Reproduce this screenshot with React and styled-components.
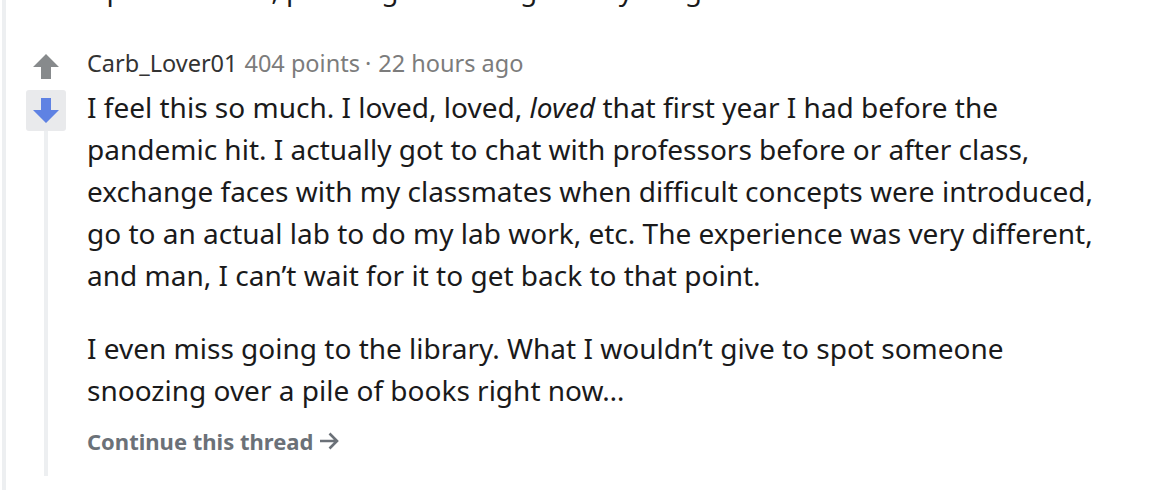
import React from "react";
import styled, { createGlobalStyle } from "styled-components";

const Global = createGlobalStyle`
  html, body { margin: 0; padding: 0; background: #ffffff; }
  body { font-family: "Noto Sans", "Open Sans", sans-serif; }
`;

const Page = styled.div`
  width: 1160px;
  height: 490px;
  overflow: hidden;
  background: #ffffff;
`;

const Thread = styled.div`
  margin-left: 2px;
  border-left: 4px solid #edeff1;
  min-height: 490px;
  box-sizing: border-box;
`;

const ClippedLine = styled.div`
  height: 10px;
  overflow: hidden;
  padding-left: 50px;
`;

const ClippedText = styled.p`
  margin: -32px 0 0 0;
  font-size: 28px;
  line-height: 42px;
  color: #1a1a1b;
  white-space: nowrap;
`;

const Comment = styled.div`
  display: flex;
  padding-top: 38px;
`;

const VoteColumn = styled.div`
  width: 40px;
  margin-left: 20px;
  margin-right: 21px;
  display: flex;
  flex-direction: column;
  align-items: center;
  flex-shrink: 0;
`;

const VoteButton = styled.button`
  width: 40px;
  height: ${(p) => (p.$boxed ? 41 : 36)}px;
  margin-top: ${(p) => (p.$boxed ? 6 : 0)}px;
  border: none;
  border-radius: 3px;
  padding: 0;
  background: ${(p) => (p.$boxed ? "#e9eaec" : "transparent")};
  display: flex;
  align-items: center;
  justify-content: center;
  color: ${(p) => p.$color};
`;

const ThreadLine = styled.div`
  width: 4px;
  flex: 1;
  background: #edeff1;
`;

const Body = styled.div`
  flex: 1;
  padding-bottom: 20px;
`;

const Meta = styled.div`
  display: flex;
  align-items: baseline;
  font-size: 23.5px;
  line-height: 30px;
  color: #7c7c7c;
`;

const MetaItem = styled.span`
  color: ${(p) => (p.$author ? "#333333" : "#7c7c7c")};
  margin-left: ${(p) => p.$gap || 0}px;
`;

const Para = styled.p`
  margin: ${(p) => (p.$first ? "8px" : "31px")} 0 0 0;
  width: 1012px;
  font-size: 28px;
  line-height: 42px;
  color: #1a1a1b;
`;

const ContinueLink = styled.a`
  display: inline-flex;
  align-items: center;
  gap: 4px;
  margin-top: 15px;
  font-size: 22px;
  line-height: 30px;
  font-weight: 700;
  color: #6b7178;
  text-decoration: none;
`;

const Arrow = ({ dir }) => (
  <svg width="26" height="26" viewBox="0 0 26 26">
    <path
      d="M13 1 L26 14 L18 14 L18 26 L8 26 L8 14 L0 14 Z"
      fill="currentColor"
      transform={dir === "down" ? "rotate(180 13 13)" : undefined}
    />
  </svg>
);

export default function App() {
  return (
    <Page>
      <Global />
      <Thread>
        <ClippedLine>
          <ClippedText>
            the point of it all, pressing on through everything as distanced as it is.
          </ClippedText>
        </ClippedLine>
        <Comment>
          <VoteColumn>
            <VoteButton $color="#878a8c" aria-label="upvote">
              <Arrow dir="up" />
            </VoteButton>
            <VoteButton $boxed $color="#5f82e3" aria-label="downvote">
              <Arrow dir="down" />
            </VoteButton>
            <ThreadLine />
          </VoteColumn>
          <Body>
            <Meta>
              <MetaItem $author>Carb_Lover01</MetaItem>
              <MetaItem $gap={7}>404 points</MetaItem>
              <MetaItem $gap={5}>·</MetaItem>
              <MetaItem $gap={7}>22 hours ago</MetaItem>
            </Meta>
            <Para $first>
              I feel this so much. I loved, loved, <em>loved</em> that first year I had before the
              pandemic hit. I actually got to chat with professors before or after class,
              exchange faces with my classmates when difficult concepts were introduced,
              go to an actual lab to do my lab work, etc. The experience was very different,
              and man, I can’t wait for it to get back to that point.
            </Para>
            <Para>
              I even miss going to the library. What I wouldn’t give to spot someone
              snoozing over a pile of books right now…
            </Para>
            <ContinueLink href="#">
              Continue this thread
              <svg width="24" height="24" viewBox="0 0 24 24">
                <path d="M3 12 H20 M12.5 4.5 L20 12 L12.5 19.5" stroke="currentColor" strokeWidth="2.6" fill="none" />
              </svg>
            </ContinueLink>
          </Body>
        </Comment>
      </Thread>
    </Page>
  );
}
